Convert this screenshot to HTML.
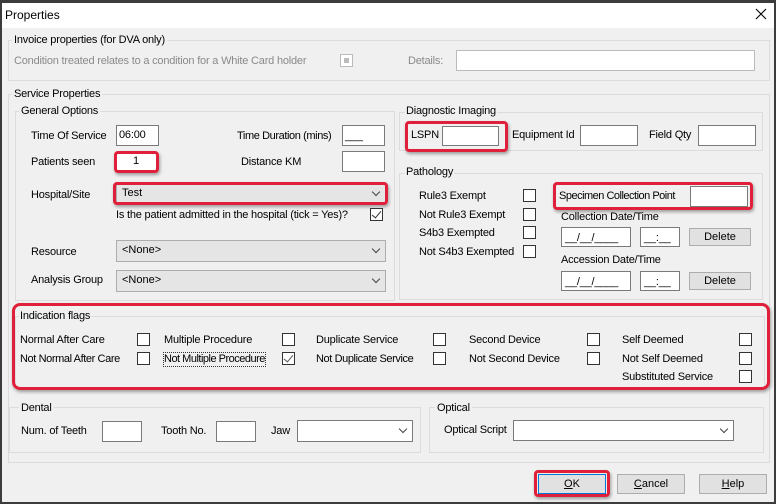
<!DOCTYPE html>
<html><head><meta charset="utf-8"><style>
*{box-sizing:border-box;margin:0;padding:0}
body{width:776px;height:504px;background:#3c3c3c;position:relative;overflow:hidden;font-family:"Liberation Sans",sans-serif;font-size:11px;color:#000}
.a{position:absolute}
.win{left:2px;top:3px;width:772px;height:499px;background:#f0f0f0}
.title{left:2px;top:3px;width:772px;height:25px;background:#fff}
.t{position:absolute;white-space:nowrap;line-height:13px;letter-spacing:-0.2px}
.g{position:absolute;border:1px solid #dcdcdc}
.in{position:absolute;background:#fff;border:1px solid #7a7a7a}
.cb{position:absolute;width:13px;height:13px;background:#fff;border:1px solid #333}
.sel{position:absolute;background:#e5e5e5;border:1px solid #adadad}
.sel.w{background:#fff;border-color:#7a7a7a}
.sel span{position:absolute;left:5px;top:3px}
.sel i{position:absolute;right:6px;top:5px;width:6px;height:6px;border-right:1px solid #444;border-bottom:1px solid #444;transform:rotate(45deg)}
.red{position:absolute;border:3px solid #e0203a;border-radius:4px;box-shadow:1px 2px 3px rgba(0,0,0,.35)}
.btn{position:absolute;background:#e1e1e1;border:1px solid #adadad;text-align:center;line-height:17px}
.gray{color:#8a8a8a}
</style></head><body>
<div class="a win"></div>
<div class="a title"></div>
<div class="t" style="left:5px;top:9px;font-size:12px;letter-spacing:0">Properties</div>
<svg class="a" style="left:755px;top:8px" width="12" height="12"><path d="M1 1L11 11M11 1L1 11" stroke="#000" stroke-width="1.1"/></svg>

<!-- invoice -->
<div class="g" style="left:8px;top:40px;width:762px;height:41px"></div>
<div class="t" style="left:12px;top:34px;background:#f0f0f0;padding:0 2px">Invoice properties (for DVA only)</div>
<div class="t gray" style="left:14px;top:55px">Condition treated relates to a condition for a White Card holder</div>
<div class="cb" style="left:340px;top:54px;border-color:#bbb;background:#fff"><div class="a" style="left:3px;top:3px;width:5px;height:5px;background:#bbb"></div></div>
<div class="t gray" style="left:408px;top:55px">Details:</div>
<div class="in" style="left:456px;top:50px;width:299px;height:21px;border-color:#bbb"></div>

<!-- service -->
<div class="g" style="left:8px;top:94px;width:762px;height:369px"></div>
<div class="t" style="left:12px;top:88px;background:#f0f0f0;padding:0 2px">Service Properties</div>

<div class="g" style="left:15px;top:111px;width:380px;height:190px"></div>
<div class="t" style="left:19px;top:105px;background:#f0f0f0;padding:0 2px">General Options</div>
<div class="t" style="left:31px;top:130px">Time Of Service</div>
<div class="in" style="left:116px;top:125px;width:43px;height:21px"><span class="t" style="left:2px;top:3px">06:00</span></div>
<div class="t" style="left:237px;top:130px;letter-spacing:-0.4px">Time Duration (mins)</div>
<div class="in" style="left:342px;top:125px;width:43px;height:21px"><span class="t" style="left:2px;top:4px">___</span></div>
<div class="t" style="left:31px;top:156px">Patients seen</div>
<div class="in" style="left:117px;top:153px;width:39px;height:17px;border:none"><span class="t" style="left:16px;top:2px">1</span></div>
<div class="red" style="left:114px;top:151px;width:45px;height:22px"></div>
<div class="t" style="left:241px;top:156px">Distance KM</div>
<div class="in" style="left:342px;top:151px;width:43px;height:21px"></div>
<div class="t" style="left:31px;top:189px">Hospital/Site</div>
<div class="sel" style="left:116px;top:184px;width:270px;height:19px"><span style="top:2px">Test</span><i style="top:4px"></i></div>
<div class="red" style="left:113px;top:182px;width:275px;height:23px"></div>
<div class="t" style="left:116px;top:209px">Is the patient admitted in the hospital (tick = Yes)?</div>
<div class="cb" style="left:370px;top:208px"><div class="a" style="left:3px;top:0px;width:5px;height:9px;border-right:1px solid #333;border-bottom:1px solid #333;transform:rotate(40deg)"></div></div>
<div class="t" style="left:31px;top:246px">Resource</div>
<div class="sel" style="left:116px;top:240px;width:270px;height:22px"><span>&lt;None&gt;</span><i></i></div>
<div class="t" style="left:31px;top:274px">Analysis Group</div>
<div class="sel" style="left:116px;top:270px;width:270px;height:22px"><span>&lt;None&gt;</span><i></i></div>

<!-- diagnostic -->
<div class="g" style="left:399px;top:112px;width:364px;height:39px"></div>
<div class="t" style="left:405px;top:105px;background:#f0f0f0;padding:0 1px">Diagnostic Imaging</div>
<div class="t" style="left:411px;top:129px">LSPN</div>
<div class="in" style="left:442px;top:126px;width:57px;height:20px"></div>
<div class="red" style="left:405px;top:121px;width:103px;height:31px"></div>
<div class="t" style="left:512px;top:129px">Equipment Id</div>
<div class="in" style="left:580px;top:125px;width:58px;height:21px"></div>
<div class="t" style="left:649px;top:129px">Field Qty</div>
<div class="in" style="left:698px;top:125px;width:58px;height:21px"></div>

<!-- pathology -->
<div class="g" style="left:399px;top:173px;width:364px;height:127px"></div>
<div class="t" style="left:405px;top:166px;background:#f0f0f0;padding:0 1px">Pathology</div>
<div class="t" style="left:419px;top:190px">Rule3 Exempt</div>
<div class="t" style="left:419px;top:209px">Not Rule3 Exempt</div>
<div class="t" style="left:419px;top:227px">S4b3 Exempted</div>
<div class="t" style="left:419px;top:246px">Not S4b3 Exempted</div>
<div class="cb" style="left:523px;top:189px"></div>
<div class="cb" style="left:523px;top:208px"></div>
<div class="cb" style="left:523px;top:226px"></div>
<div class="cb" style="left:523px;top:245px"></div>
<div class="t" style="left:559px;top:190px;letter-spacing:-0.5px">Specimen Collection Point</div>
<div class="in" style="left:690px;top:186px;width:58px;height:21px"></div>
<div class="red" style="left:553px;top:182px;width:200px;height:28px"></div>
<div class="t" style="left:561px;top:211px">Collection Date/Time</div>
<div class="in" style="left:561px;top:227px;width:70px;height:20px"><span class="t" style="left:3px;top:4px">__/__/____</span></div>
<div class="in" style="left:640px;top:227px;width:40px;height:20px"><span class="t" style="left:3px;top:4px">__:__</span></div>
<div class="btn" style="left:689px;top:228px;width:62px;height:18px">Delete</div>
<div class="t" style="left:561px;top:254px">Accession Date/Time</div>
<div class="in" style="left:561px;top:271px;width:70px;height:20px"><span class="t" style="left:3px;top:4px">__/__/____</span></div>
<div class="in" style="left:640px;top:271px;width:40px;height:20px"><span class="t" style="left:3px;top:4px">__:__</span></div>
<div class="btn" style="left:689px;top:272px;width:62px;height:18px">Delete</div>

<!-- indication -->
<div class="g" style="left:15px;top:316px;width:750px;height:72px"></div>
<div class="t" style="left:19px;top:310px;background:#f0f0f0;padding:0 1px">Indication flags</div>
<div class="t" style="left:20px;top:334px">Normal After Care</div>
<div class="t" style="left:20px;top:353px;letter-spacing:-0.4px">Not Normal After Care</div>
<div class="t" style="left:164px;top:334px">Multiple Procedure</div>
<div class="t" style="left:164px;top:353px;outline:1px dotted #333;letter-spacing:-0.5px">Not Multiple Procedure</div>
<div class="t" style="left:316px;top:334px">Duplicate Service</div>
<div class="t" style="left:316px;top:353px;letter-spacing:-0.4px">Not Duplicate Service</div>
<div class="t" style="left:469px;top:334px">Second Device</div>
<div class="t" style="left:469px;top:353px">Not Second Device</div>
<div class="t" style="left:622px;top:334px">Self Deemed</div>
<div class="t" style="left:622px;top:353px">Not Self Deemed</div>
<div class="t" style="left:622px;top:371px">Substituted Service</div>
<div class="cb" style="left:137px;top:333px"></div><div class="cb" style="left:137px;top:352px"></div>
<div class="cb" style="left:282px;top:333px"></div>
<div class="cb" style="left:282px;top:352px"><div class="a" style="left:3px;top:0px;width:5px;height:9px;border-right:1px solid #555;border-bottom:1px solid #555;transform:rotate(40deg)"></div></div>
<div class="cb" style="left:433px;top:333px"></div><div class="cb" style="left:433px;top:352px"></div>
<div class="cb" style="left:587px;top:333px"></div><div class="cb" style="left:587px;top:352px"></div>
<div class="cb" style="left:739px;top:333px"></div><div class="cb" style="left:739px;top:352px"></div><div class="cb" style="left:739px;top:370px"></div>
<div class="red" style="left:12px;top:303px;width:758px;height:87px;border-radius:8px"></div>

<!-- dental -->
<div class="g" style="left:9px;top:407px;width:412px;height:46px"></div>
<div class="t" style="left:19px;top:402px;background:#f0f0f0;padding:0 2px">Dental</div>
<div class="t" style="left:21px;top:425px">Num. of Teeth</div>
<div class="in" style="left:102px;top:421px;width:40px;height:21px"></div>
<div class="t" style="left:161px;top:425px">Tooth No.</div>
<div class="in" style="left:216px;top:421px;width:40px;height:21px"></div>
<div class="t" style="left:271px;top:425px">Jaw</div>
<div class="sel w" style="left:297px;top:420px;width:116px;height:22px"><i></i></div>
<div class="g" style="left:429px;top:407px;width:335px;height:46px"></div>
<div class="t" style="left:435px;top:402px;background:#f0f0f0;padding:0 2px">Optical</div>
<div class="t" style="left:444px;top:424px">Optical Script</div>
<div class="sel w" style="left:513px;top:420px;width:221px;height:21px"><i></i></div>

<!-- buttons -->
<div class="btn" style="left:538px;top:474px;width:68px;height:20px;border-color:#0078d7;line-height:19px"><u>O</u>K</div>
<div class="red" style="left:534px;top:470px;width:76px;height:27px"></div>
<div class="btn" style="left:617px;top:474px;width:68px;height:20px;line-height:19px"><u>C</u>ancel</div>
<div class="btn" style="left:699px;top:474px;width:68px;height:20px;line-height:19px"><u>H</u>elp</div>
</body></html>
